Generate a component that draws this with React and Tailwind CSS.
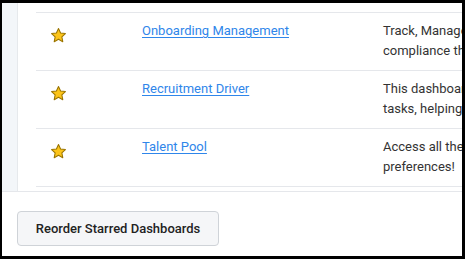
import React from "react";

function Star() {
  return (
    <svg width="17" height="17" viewBox="0 0 24 24" className="block">
      <path
        d="M12 2.2l2.95 6.2 6.8.85-5 4.7 1.28 6.75L12 17.4l-6.03 3.3 1.28-6.75-5-4.7 6.8-.85z"
        fill="#fcc419"
        stroke="#9a7400"
        strokeWidth="1.5"
        strokeLinejoin="round"
      />
    </svg>
  );
}

const rows = [
  {
    name: "Onboarding Management",
    lines: ["Track, Manage and monitor every onboarding activity and ensure", "compliance throughout the whole process."],
  },
  {
    name: "Recruitment Driver",
    lines: ["This dashboard drives all your recruitment related activities and", "tasks, helping you hire the best talent faster."],
  },
  {
    name: "Talent Pool",
    lines: ["Access all the candidates in your talent pool and filter them by your", "preferences!"],
  },
];

export default function App() {
  return (
    <div
      className="w-[465px] h-[259px] bg-black pt-[3px] pl-[2px] pr-[3px] pb-[3px]"
      style={{ fontFamily: "Roboto, 'Liberation Sans', sans-serif" }}
    >
      <div className="w-[460px] h-[253px] bg-white flex flex-col overflow-hidden">
        <div className="h-[188px] flex shrink-0">
          <div className="w-[16px] shrink-0 bg-[#f3f6f9] border-r border-[#e6e9ec]" />
          <div className="flex-1 pl-[18px] pt-[9px] overflow-hidden">
            <div className="w-[700px] border-b border-[#e5e7eb]">
              {rows.map((r) => (
                <div key={r.name} className="flex h-[58px] border-t border-[#e5e7eb] text-[13px] leading-[20px]">
                  <div className="w-[94px] shrink-0 pl-[14px] pt-[14px]">
                    <Star />
                  </div>
                  <div className="w-[253px] shrink-0 pl-[12px] pt-[8px]">
                    <a href="#" className="text-[#2f86ea] underline underline-offset-2">
                      {r.name}
                    </a>
                  </div>
                  <div className="flex-1 pt-[8px] text-[#333333] whitespace-nowrap">
                    {r.lines.map((l) => (
                      <div key={l}>{l}</div>
                    ))}
                  </div>
                </div>
              ))}
            </div>
          </div>
        </div>
        <div className="border-t border-[#e5e7eb] pl-[15px] pt-[19px]">
          <button className="w-[202px] h-[35px] rounded-[4px] border border-[#cfd3d8] bg-[#f5f6f8] text-[13px] text-[#222222] font-medium">
            Reorder Starred Dashboards
          </button>
        </div>
      </div>
    </div>
  );
}
